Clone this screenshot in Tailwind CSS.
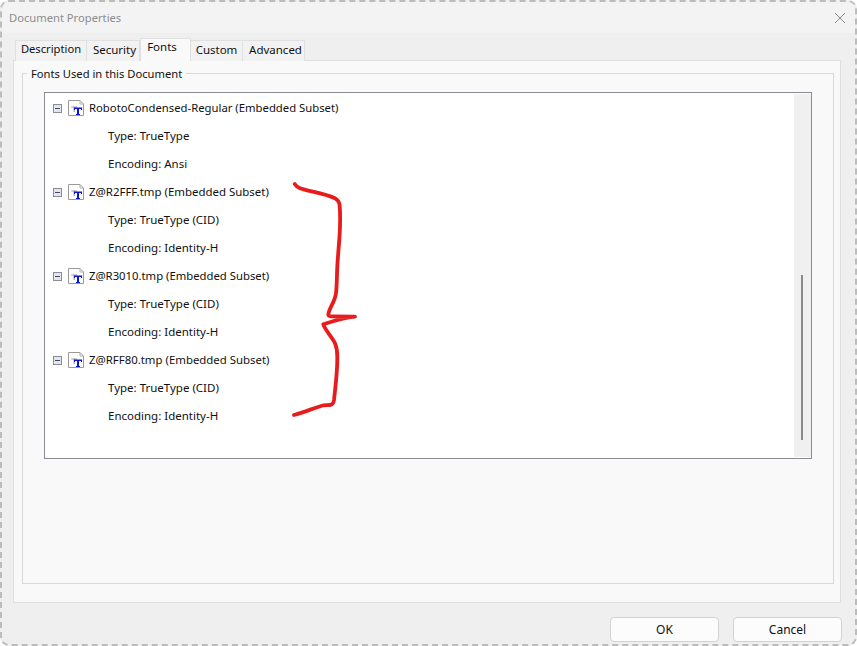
<!DOCTYPE html>
<html>
<head>
<meta charset="utf-8">
<script src="https://cdn.jsdelivr.net/npm/@tailwindcss/browser@4"></script>
<title>Document Properties</title>
</head>
<body class="m-0 bg-white">
<div class="relative w-[857px] h-[646px] overflow-hidden bg-white font-['Noto_Sans','Open_Sans',sans-serif] text-[11.5px] text-[#111]">
  <div class="flex flex-col w-full h-full border-2 border-dashed border-[#bcbcbc] rounded-[9px] bg-[#efefef] overflow-hidden">
    <div class="h-[31px] shrink-0 bg-[#f3f3f3] flex items-center justify-between pl-[7px] pr-[9px]">
      <span class="mt-[2px] text-[11.2px] text-[#8d8d8d]">Document Properties</span>
      <svg width="12" height="12" viewBox="0 0 12 12"><path d="M1 1 L11 11 M11 1 L1 11" stroke="#8a8a8a" stroke-width="1" fill="none"/></svg>
    </div>
    <div class="flex items-end h-[24px] mt-[4px] ml-[12px] relative z-10 shrink-0">
      <div class="w-[72px] h-[21px] pb-[3px] ml-[1px] flex items-center justify-center text-[11.2px] bg-[#f2f2f2] border border-b-0 border-[#e0e0e0]">Description</div>
      <div class="w-[53px] h-[21px] pb-[3px] pl-[3px] flex items-center justify-center bg-[#f2f2f2] border border-b-0 border-l-0 border-[#e0e0e0]">Security</div>
      <div class="w-[51px] h-[23px] pb-[6px] pr-[7px] flex items-center justify-center bg-[#f9f9f9] border border-b-0 border-[#e0e0e0]">Fonts</div>
      <div class="w-[52px] h-[21px] pb-[3px] flex items-center justify-center bg-[#f2f2f2] border border-b-0 border-l-0 border-[#e0e0e0]">Custom</div>
      <div class="w-[62px] h-[21px] pb-[3px] pl-[4px] flex items-center justify-center bg-[#f2f2f2] border border-b-0 border-l-0 border-[#e0e0e0]">Advanced</div>
    </div>
    <div class="mt-[-1px] ml-[11px] w-[828px] h-[543px] shrink-0 bg-[#f9f9f9] border border-[#dfdfdf] pt-[12px] pl-[8px]">
      <div class="relative w-[812px] h-[511px] border border-[#d9d9d9] pt-[18px] pl-[21px]">
        <span class="absolute left-[4px] top-[-8px] px-[4px] bg-[#f9f9f9] leading-[16px] text-[11.2px]">Fonts Used in this Document</span>
        <div class="flex w-[768px] h-[367px] border border-[#8b8b96] bg-white">
          <div class="flex-1 pt-[1px]">
            <div class="h-[28px] flex items-center pl-[8px]">
              <svg width="9" height="9" viewBox="0 0 9 9"><rect x="0.5" y="0.5" width="8" height="8" fill="#e4e6ec" stroke="#8c8c98"/><path d="M2 4.5H7" stroke="#3c4a68"/></svg>
              <svg class="ml-[6px]" width="17" height="17" viewBox="0 0 17 17"><path d="M0.5 0.5H12L15.5 4V15.5H0.5Z" fill="#fff" stroke="#9a9a9a"/><path d="M12 0.5V4H15.5" fill="none" stroke="#b0b0b0"/><path d="M3.3 6.5H9V7.5H6.7V12H5.6V7.5H3.3Z" fill="#9a9a9a"/><path d="M6 7.5H14V10H13V9H11V14H12V15H8V14H9V9H7V10H6Z" fill="#0a14e0"/></svg>
              <span class="ml-[4px] text-[11.3px]">RobotoCondensed-Regular (Embedded Subset)</span>
            </div>
            <div class="h-[28px] flex items-center pl-[63px]">Type: TrueType</div>
            <div class="h-[28px] flex items-center pl-[63px]">Encoding: Ansi</div>
            <div class="h-[28px] flex items-center pl-[8px]">
              <svg width="9" height="9" viewBox="0 0 9 9"><rect x="0.5" y="0.5" width="8" height="8" fill="#e4e6ec" stroke="#8c8c98"/><path d="M2 4.5H7" stroke="#3c4a68"/></svg>
              <svg class="ml-[6px]" width="17" height="17" viewBox="0 0 17 17"><path d="M0.5 0.5H12L15.5 4V15.5H0.5Z" fill="#fff" stroke="#9a9a9a"/><path d="M12 0.5V4H15.5" fill="none" stroke="#b0b0b0"/><path d="M3.3 6.5H9V7.5H6.7V12H5.6V7.5H3.3Z" fill="#9a9a9a"/><path d="M6 7.5H14V10H13V9H11V14H12V15H8V14H9V9H7V10H6Z" fill="#0a14e0"/></svg>
              <span class="ml-[4px] text-[11.45px]">Z@R2FFF.tmp (Embedded Subset)</span>
            </div>
            <div class="h-[28px] flex items-center pl-[63px]">Type: TrueType (CID)</div>
            <div class="h-[28px] flex items-center pl-[63px]">Encoding: Identity-H</div>
            <div class="h-[28px] flex items-center pl-[8px]">
              <svg width="9" height="9" viewBox="0 0 9 9"><rect x="0.5" y="0.5" width="8" height="8" fill="#e4e6ec" stroke="#8c8c98"/><path d="M2 4.5H7" stroke="#3c4a68"/></svg>
              <svg class="ml-[6px]" width="17" height="17" viewBox="0 0 17 17"><path d="M0.5 0.5H12L15.5 4V15.5H0.5Z" fill="#fff" stroke="#9a9a9a"/><path d="M12 0.5V4H15.5" fill="none" stroke="#b0b0b0"/><path d="M3.3 6.5H9V7.5H6.7V12H5.6V7.5H3.3Z" fill="#9a9a9a"/><path d="M6 7.5H14V10H13V9H11V14H12V15H8V14H9V9H7V10H6Z" fill="#0a14e0"/></svg>
              <span class="ml-[4px] text-[11.3px]">Z@R3010.tmp (Embedded Subset)</span>
            </div>
            <div class="h-[28px] flex items-center pl-[63px]">Type: TrueType (CID)</div>
            <div class="h-[28px] flex items-center pl-[63px]">Encoding: Identity-H</div>
            <div class="h-[28px] flex items-center pl-[8px]">
              <svg width="9" height="9" viewBox="0 0 9 9"><rect x="0.5" y="0.5" width="8" height="8" fill="#e4e6ec" stroke="#8c8c98"/><path d="M2 4.5H7" stroke="#3c4a68"/></svg>
              <svg class="ml-[6px]" width="17" height="17" viewBox="0 0 17 17"><path d="M0.5 0.5H12L15.5 4V15.5H0.5Z" fill="#fff" stroke="#9a9a9a"/><path d="M12 0.5V4H15.5" fill="none" stroke="#b0b0b0"/><path d="M3.3 6.5H9V7.5H6.7V12H5.6V7.5H3.3Z" fill="#9a9a9a"/><path d="M6 7.5H14V10H13V9H11V14H12V15H8V14H9V9H7V10H6Z" fill="#0a14e0"/></svg>
              <span class="ml-[4px] text-[11.4px]">Z@RFF80.tmp (Embedded Subset)</span>
            </div>
            <div class="h-[28px] flex items-center pl-[63px]">Type: TrueType (CID)</div>
            <div class="h-[28px] flex items-center pl-[63px]">Encoding: Identity-H</div>
          </div>
          <div class="relative w-[17px] h-[363px] mt-[1px] bg-[#f0f0f0]">
            <div class="absolute left-[7px] top-[181px] w-[2px] h-[165px] bg-[#8a8a8a]"></div>
          </div>
        </div>
      </div>
    </div>
    <div class="flex justify-end gap-[14px] mt-[14px] mr-[13px] text-[12px]">
      <div class="w-[109px] h-[25px] flex items-center justify-center bg-[#fcfcfc] border border-[#d2d2d2] rounded-[4px]">OK</div>
      <div class="w-[109px] h-[25px] flex items-center justify-center bg-[#fcfcfc] border border-[#d2d2d2] rounded-[4px]">Cancel</div>
    </div>
  </div>
  <svg class="absolute left-0 top-0 pointer-events-none" width="857" height="646" viewBox="0 0 857 646">
    <path d="M294.7 184 C296 186 298 187.5 300 188.3 C304 189.8 309 190.7 313 191.7 C321 193.5 329 195.5 335 198.3 C338 200 339.3 201.5 339.6 205 C340.3 212 340.2 219 340 226.7 C339.6 240 338 253 337.3 266.7 C336.8 276 337 285 336 293.3 C335 302 329 308 328.3 314.5 C328.3 316 329.5 316.4 332 316.4 L355 316.7 C345 317.5 332 321.5 323.3 324.3 C325 330 332 337 335 343.3 C337 348 337.3 352 337.3 356.7 C337.5 372 335.5 386 334 400 C333.5 403.5 332.5 404.8 330 405 C327 405.3 324 405 321.7 405.7 C313 408.5 303 412.5 294 415" fill="none" stroke="#e81c1c" stroke-width="3.8" stroke-linecap="round" stroke-linejoin="round"/>
  </svg>
</div>
</body>
</html>
